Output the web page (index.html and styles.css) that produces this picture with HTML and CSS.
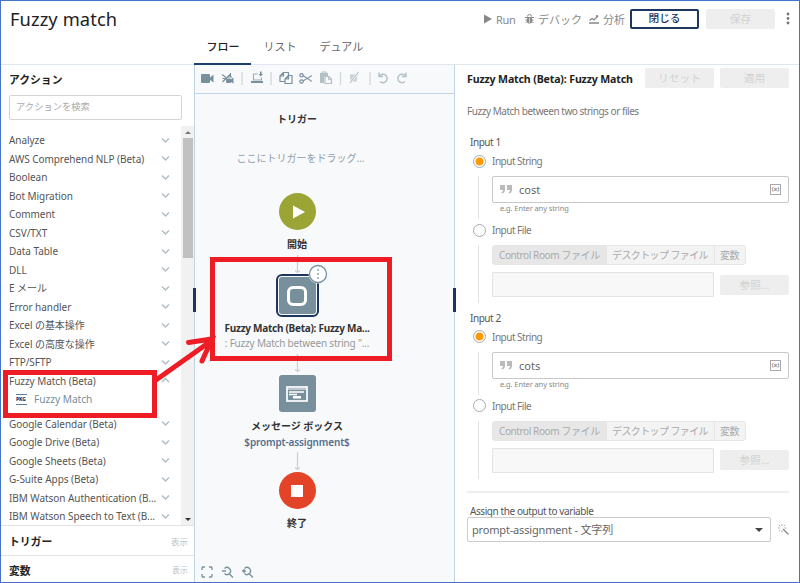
FILE: index.html
```html
<!DOCTYPE html>
<html lang="ja">
<head>
    <meta charset="UTF-8">
    <title>Fuzzy match</title>
    <link rel="stylesheet" href="styles.css">
</head>
<body>
    <div class="app">
        <header class="header">
            <div class="header-top">
                <h1 class="title">Fuzzy match</h1>
                <div class="tools">
                    <span class="tool run"><svg width="8" height="10" viewBox="0 0 8 10"><path d="M0 0.5L8 5L0 9.5Z" fill="#888"/></svg>Run</span>
                    <span class="tool debug"><svg width="9" height="10" viewBox="0 0 9 10"><path d="M2.5 2.5a2 2 0 0 1 4 0M0 3.5h9M0.5 6h8M0.5 9l2-2M8.5 9l-2-2" fill="none" stroke="#888"/><rect x="2" y="3" width="5" height="6.5" rx="2" fill="#888"/><path d="M4.5 4v5" stroke="#fff" stroke-width=".7"/></svg>デバック</span>
                    <span class="tool stats"><svg width="10" height="9" viewBox="0 0 10 9"><path d="M0.5 5.5L3 3.5L5 5L9 1M7 1h2.3M0 8h10" fill="none" stroke="#888" stroke-width="1.3"/></svg>分析</span>
                </div>
                <button class="btn btn-close">閉じる</button>
                <button class="btn btn-save" disabled>保存</button>
                <svg class="more" width="4" height="13" viewBox="0 0 4 13" fill="#777"><circle cx="2" cy="2" r="1.4"/><circle cx="2" cy="6.5" r="1.4"/><circle cx="2" cy="11" r="1.4"/></svg>
            </div>
            <nav class="tabs">
                <a class="tab active">フロー</a>
                <a class="tab">リスト</a>
                <a class="tab">デュアル</a>
            </nav>
        </header>
        <div class="main">
            <aside class="sidebar">
                <h2 class="side-title">アクション</h2>
                <div class="search">アクションを検索</div>
                <div class="list-wrap">
                    <ul class="list" id="actions"></ul>
                    <div class="scrollbar">
                        <span class="arrow-up"></span>
                        <span class="thumb"></span>
                        <span class="arrow-down"></span>
                    </div>
                </div>
                <div class="section"><b>トリガー</b><span>表示</span></div>
                <div class="section section-last"><b>変数</b><span>表示</span></div>
            </aside>
            <section class="center">
                <div class="toolbar">
                    <svg width="259" height="28" viewBox="195 65 259 28" fill="none">
                        <g fill="#78909c">
                            <rect x="201" y="74" width="9" height="9" rx="1"/>
                            <path d="M209.5 78L213.500 74.500V82.500L209.500 79.500Z"/>
                            <rect x="226" y="78.500" width="5" height="4.500" rx="1"/>
                            <path d="M230 80L233.500 77.500V83.500L230 81.500Z"/>
                            <rect x="251" y="81" width="12" height="2"/>
                            <path d="M260 71.500h1.600v2.500h1.400L260.800 76.500L258.500 74H260Z"/>
                        </g>
                        <path d="M222 74.500l4 3M222.500 82l8.500-8.500M228 77h4M222.500 78.500h3.500M230.500 73v4" stroke="#78909c" stroke-width="1.100"/>
                        <path d="M257.500 74h-4v6h8v-2.500" stroke="#9aabb4" stroke-width="1.100"/>
                        <path d="M242 72v13M271 72v13M340.500 72v13M370 72v13" stroke="#d3d8da" stroke-width="1.300"/>
                        <path d="M283.500 72.500h5v2.500M285 81.500h-5V76L283.500 72.500V76H280" stroke="#78909c" stroke-width="1.200" stroke-linejoin="round"/>
                        <path d="M288.500 75.500h3.500V83.500h-7V79L288.500 75.500V79H285" stroke="#78909c" stroke-width="1.200" stroke-linejoin="round"/>
                        <path d="M303 75.500l9 6M303 81l9-5.500" stroke="#8a9ea8" stroke-width="1.300"/>
                        <circle cx="301.500" cy="75.300" r="1.700" stroke="#78909c" stroke-width="1.200"/>
                        <circle cx="301.500" cy="81.500" r="1.700" stroke="#78909c" stroke-width="1.200"/>
                        <path d="M320 73h8v3h-4v7h-4Z" fill="#b3c1c7"/>
                        <path d="M322 73v-1h4v1" stroke="#b3c1c7"/>
                        <path d="M325 76.500h4l2.500 2.500v4.500H325Z" fill="#f8f9fb" stroke="#b3c1c7" stroke-width="1.200"/>
                        <path d="M328.500 76.500v3h3" stroke="#b3c1c7"/>
                        <path d="M350 74.500h7.500l-1 7h-6Z" fill="#c3ced3"/>
                        <path d="M350 83l8.500-11" stroke="#f8f9fb" stroke-width="2.500"/>
                        <path d="M350 83l8.500-11" stroke="#b3c1c7" stroke-width="1.200"/>
                        <path d="M379 72.500v4h4M379.500 76a4.200 4.200 0 1 1 .5 5.500" stroke="#b5c3c9" stroke-width="1.500"/>
                        <path d="M406 72.500v4h-4M405.500 76a4.200 4.200 0 1 0-.5 5.500" stroke="#b5c3c9" stroke-width="1.500"/>
                    </svg>
                </div>
                <div class="canvas">
                    <div class="flow">
                        <div class="flow-title">トリガー</div>
                        <div class="flow-hint">ここにトリガーをドラッグ...</div>
                        <div class="node circle start"><svg width="12" height="14" viewBox="0 0 12 14"><path d="M0 0.500L12 7L0 13.500Z" fill="#fff"/></svg></div>
                        <div class="label">開始</div>
                        <svg class="link" width="7" height="19" viewBox="0 0 7 19"><path d="M3.500 0v17M1 15.500l2.500 2L6 15.500" fill="none" stroke="#d0d0d0" stroke-width="1.300"/></svg>
                        <div class="node-selected">
                            <div class="node square"><svg width="20" height="20" viewBox="0 0 20 20"><rect x="1.500" y="1.500" width="17" height="17" rx="4.500" fill="none" stroke="#fff" stroke-width="3"/></svg></div>
                            <svg class="node-menu" width="20" height="20" viewBox="0 0 20 20"><circle cx="10" cy="10" r="9.500" fill="#f8f9fb"/><circle cx="10" cy="10" r="8.500" fill="#fff" stroke="#78909c" stroke-width="1.300"/><g fill="#90a4ae"><circle cx="10" cy="6" r="1"/><circle cx="10" cy="10" r="1"/><circle cx="10" cy="14" r="1"/></g></svg>
                        </div>
                        <div class="label label-match">Fuzzy Match (Beta): Fuzzy Ma...</div>
                        <div class="sub">: Fuzzy Match between string "...</div>
                        <svg class="link" width="7" height="19" viewBox="0 0 7 19"><path d="M3.500 0v17M1 15.500l2.500 2L6 15.500" fill="none" stroke="#d0d0d0" stroke-width="1.300"/></svg>
                        <div class="node square box"><svg width="22" height="16" viewBox="0 0 22 16"><rect x="1" y="1" width="20" height="14" fill="none" stroke="#fff" stroke-width="1.700"/><path d="M1 3h20" stroke="#fff"/><path d="M3 6h15M3 8.500h8" stroke="#fff" stroke-width="1.300"/><rect x="7" y="10" width="8" height="2.500" fill="#fff"/></svg></div>
                        <div class="label label-box">メッセージ ボックス</div>
                        <div class="sub variable">$prompt-assignment$</div>
                        <svg class="link" width="7" height="19" viewBox="0 0 7 19"><path d="M3.500 0v17M1 15.500l2.500 2L6 15.500" fill="none" stroke="#d0d0d0" stroke-width="1.300"/></svg>
                        <div class="node circle stop"><span></span></div>
                        <div class="label">終了</div>
                    </div>
                    <div class="zoom">
                        <svg width="12" height="12" viewBox="0 0 12 12"><path d="M1 4V2q0-1 1-1h2M8 1h2q1 0 1 1v2M11 8v2q0 1-1 1H8M4 11H2q-1 0-1-1V8" fill="none" stroke="#78909c" stroke-width="1.300"/></svg>
                        <svg width="12" height="12" viewBox="0 0 12 12"><path d="M2.500 2.500a3.500 3.500 0 1 1 0 5M7.500 8l3.500 3.500M0 5h4" fill="none" stroke="#78909c" stroke-width="1.300"/></svg>
                        <svg width="12" height="12" viewBox="0 0 12 12"><path d="M2.500 2.500a3.500 3.500 0 1 1 0 5M7.500 8l3.500 3.500M0 5h4M2 3v4" fill="none" stroke="#78909c" stroke-width="1.300"/></svg>
                    </div>
                </div>
                <span class="handle handle-left"></span>
                <span class="handle handle-right"></span>
            </section>
            <section class="panel">
                <div class="panel-head">
                    <h2>Fuzzy Match (Beta): Fuzzy Match</h2>
                    <button class="btn btn-small" disabled>リセット</button>
                    <button class="btn btn-small" disabled>適用</button>
                </div>
                <p class="desc">Fuzzy Match between two strings or files</p>
                <div class="group">
                    <div class="group-title">Input 1</div>
                    <div class="option"><span class="radio checked"></span>Input String</div>
                    <div class="string-body">
                        <div class="field">
                            <svg width="12" height="9" viewBox="0 0 12 9" fill="#bbb"><path d="M0 0h5v5q0 2.500-3 3.500L1.500 7.500Q3 6.500 3 5H0ZM7 0h5v5q0 2.500-3 3.500L8.500 7.500Q10 6.500 10 5H7Z"/></svg>
                            <span>cost</span>
                            <i class="var-icon">(x)</i>
                        </div>
                        <div class="eg">e.g. Enter any string</div>
                    </div>
                    <div class="option"><span class="radio"></span>Input File</div>
                    <div class="file-body">
                        <div class="segments"><span class="on">Control Room ファイル</span><span>デスクトップ ファイル</span><span>変数</span></div>
                        <div class="browse"><div class="path"></div><button class="btn btn-small" disabled>参照...</button></div>
                    </div>
                </div>
                <div class="group">
                    <div class="group-title">Input 2</div>
                    <div class="option"><span class="radio checked"></span>Input String</div>
                    <div class="string-body">
                        <div class="field">
                            <svg width="12" height="9" viewBox="0 0 12 9" fill="#bbb"><path d="M0 0h5v5q0 2.500-3 3.500L1.500 7.500Q3 6.500 3 5H0ZM7 0h5v5q0 2.500-3 3.500L8.500 7.500Q10 6.500 10 5H7Z"/></svg>
                            <span>cots</span>
                            <i class="var-icon">(x)</i>
                        </div>
                        <div class="eg">e.g. Enter any string</div>
                    </div>
                    <div class="option"><span class="radio"></span>Input File</div>
                    <div class="file-body">
                        <div class="segments"><span class="on">Control Room ファイル</span><span>デスクトップ ファイル</span><span>変数</span></div>
                        <div class="browse"><div class="path"></div><button class="btn btn-small" disabled>参照...</button></div>
                    </div>
                </div>
                <div class="output">
                    <div class="output-label">Assign the output to variable</div>
                    <div class="output-row">
                        <div class="select">prompt-assignment - 文字列<span class="caret"></span></div>
                        <svg width="11" height="11" viewBox="0 0 11 11"><path d="M5 5L10.500 10.500" stroke="#888" stroke-width="1.300"/><path d="M4 0v1.700M0 4h1.700M1 1l1.300 1.300M7.200 1L6 2.200M1 7.200L2.300 6M4 6.500V8.200M6.500 4h1.700" stroke="#999" stroke-width=".9" fill="none"/></svg>
                    </div>
                </div>
            </section>
        </div>
        <div class="mark mark-action"></div>
        <div class="mark mark-node"></div>
        <svg class="mark-arrow" width="70" height="60" viewBox="150 330 70 60"><path d="M156 380L211 341M188.500 342.500L212 339L202 361" fill="none" stroke="#ee1c25" stroke-width="5" stroke-linecap="round"/></svg>
    </div>
    <script>
        const actions = [
            'Analyze', 'AWS Comprehend NLP (Beta)', 'Boolean', 'Bot Migration', 'Comment',
            'CSV/TXT', 'Data Table', 'DLL', 'E メール', 'Error handler',
            'Excel の基本操作', 'Excel の高度な操作', 'FTP/SFTP', 'Fuzzy Match (Beta)',
            'Google Calendar (Beta)', 'Google Drive (Beta)', 'Google Sheets (Beta)',
            'G-Suite Apps (Beta)', 'IBM Watson Authentication (B...', 'IBM Watson Speech to Text (B...'
        ];
        const list = document.getElementById('actions');

        actions.forEach(name => {
            const open = name === 'Fuzzy Match (Beta)';
            const d = open ? 'M1 5L4.5 1.5L8 5' : 'M1 1.5L4.5 5L8 1.5';
            list.insertAdjacentHTML('beforeend',
                `<li class="item"><span>${name}</span><svg width="9" height="7" viewBox="0 0 9 7"><path d="${d}" fill="none" stroke="#b0bec5" stroke-width="1.5"/></svg></li>`);
            if (open) {
                list.insertAdjacentHTML('beforeend', '<li class="item child"><i class="pkg">PKG</i><span>Fuzzy Match</span></li>');
            }
        });
    </script>
</body>
</html>
```

FILE: styles.css
```css
* {
    box-sizing: border-box;
}
body {
    margin: 0;
    font-family: "Noto Sans", "Noto Sans CJK JP", sans-serif;
    font-size: 10px;
    color: #555;
    background: #fff;
}
h1, h2, p, ul {
    margin: 0;
    padding: 0;
}
svg {
    display: block;
    flex: none;
}
.app {
    position: relative;
    display: flex;
    flex-direction: column;
    width: 800px;
    height: 583px;
    border: 1px solid #4472c4;
    overflow: hidden;
    white-space: nowrap;
}
.header {
    height: 64px;
    border-bottom: 1px solid #dfe6ee;
}
.header-top {
    display: flex;
    align-items: center;
    height: 35px;
    padding-left: 9px;
}
.title {
    width: 474px;
    font-size: 18.3px;
    font-weight: 400;
    line-height: 34px;
    letter-spacing: 0.1px;
    color: #222;
}
.tools {
    display: flex;
    width: 146px;
    padding-top: 1px;
    font-size: 11px;
    color: #888;
}
.tool {
    display: flex;
    align-items: center;
    gap: 4px;
    height: 16px;
}
.run {
    width: 41px;
    letter-spacing: -0.3px;
}
.debug {
    width: 64px;
}
.btn {
    flex: none;
    width: 69px;
    height: 20px;
    padding: 0;
    border: 0;
    border-radius: 2px;
    background: #eee;
    color: #d2d2d2;
    font-family: inherit;
    font-size: 10.7px;
    line-height: 18px;
}
.btn-close {
    height: 20px;
    border: 2px solid #1c3660;
    background: #fff;
    color: #1c3660;
    font-weight: 500;
    line-height: 15px;
}
.btn-save {
    margin-left: 7px;
}
.more {
    margin-left: 11px;
}
.tabs {
    display: flex;
    padding-left: 193px;
    height: 29px;
    font-size: 11px;
}
.tab {
    height: 29px;
    padding-left: 12.5px;
    line-height: 22px;
    color: #666;
}
.tab.active {
    width: 57px;
    border-bottom: 2px solid #1c3f70;
    color: #222;
    font-weight: 500;
}
.tab + .tab + .tab {
    padding-left: 23px;
}
.main {
    display: flex;
    flex: 1;
    min-height: 0;
}
.sidebar {
    display: flex;
    flex-direction: column;
    width: 193px;
}
.side-title {
    height: 30px;
    padding-left: 8px;
    font-size: 10.8px;
    line-height: 29px;
    font-weight: 700;
    color: #222;
}
.search {
    width: 173px;
    height: 25px;
    margin-left: 8px;
    padding-left: 6px;
    border: 1px solid #d5d5d5;
    border-radius: 2px;
    font-size: 9.3px;
    line-height: 22px;
    color: #aaa;
}
.list-wrap {
    display: flex;
    height: 399px;
    margin-top: 6px;
}
.list {
    width: 180px;
    padding-top: 5.2px;
    list-style: none;
}
.item {
    display: flex;
    align-items: center;
    justify-content: space-between;
    height: 18.5px;
    padding: 0 11px 0 8px;
    line-height: 18px;
    letter-spacing: -0.05px;
}
.item.child {
    height: 24.5px;
    justify-content: flex-start;
    align-items: flex-start;
    gap: 7px;
    padding-left: 15px;
    color: #78909c;
    font-size: 10.2px;
}
.pkg {
    width: 11px;
    height: 11px;
    margin-top: 4px;
    border-top: 1px solid #607d9b;
    border-bottom: 1px solid #607d9b;
    font-size: 5px;
    font-style: normal;
    font-weight: 800;
    line-height: 9px;
    color: #1c3660;
}
.scrollbar {
    display: flex;
    flex-direction: column;
    align-items: center;
    width: 13px;
    padding: 5px 0 4px;
    background: #f1f1f1;
}
.arrow-up {
    border: 3px solid transparent;
    border-top: 0;
    border-bottom-color: #777;
}
.thumb {
    width: 10px;
    height: 120px;
    margin-top: 4px;
    background: #c1c1c1;
}
.arrow-down {
    margin-top: auto;
    border: 3px solid transparent;
    border-bottom: 0;
    border-top-color: #333;
}
.section {
    display: flex;
    align-items: center;
    justify-content: space-between;
    height: 30px;
    padding: 0 6px 0 8px;
    border-top: 1px solid #e3e3e3;
    color: #bbc3c8;
    font-size: 8.5px;
}
.section b {
    font-size: 10.8px;
    color: #222;
}
.section-last {
    flex: 1;
    padding-top: 1px;
    font-size: 8px;
}
.center {
    position: relative;
    display: flex;
    flex-direction: column;
    width: 261px;
    border: solid #bfd4e6;
    border-width: 0 1px;
    background: #f8f9fb;
}
.toolbar {
    height: 29px;
    border-bottom: 1px solid #bfd4e6;
}
.canvas {
    display: flex;
    flex-direction: column;
    flex: 1;
}
.flow {
    display: flex;
    flex-direction: column;
    align-items: center;
    width: 204px;
    height: 472px;
    padding-top: 16px;
}
.flow-title {
    height: 40px;
    font-weight: 700;
    line-height: 18px;
    color: #333;
}
.flow-hint {
    height: 43px;
    padding-left: 7px;
    line-height: 17px;
    color: #90a0a8;
}
.node {
    display: flex;
    flex: none;
    align-items: center;
    justify-content: center;
    width: 37px;
    height: 37px;
}
.circle {
    border-radius: 50%;
}
.start {
    padding-left: 3px;
    background: #9ba536;
}
.stop {
    margin-top: 1px;
    background: #e34326;
}
.stop span {
    width: 12px;
    height: 12px;
    background: #fff;
}
.square {
    border-radius: 3px;
    background: #78909c;
}
.label {
    height: 25px;
    line-height: 28px;
    font-weight: 700;
    color: #333;
}
.node-selected {
    position: relative;
    flex: none;
    width: 43px;
    height: 43px;
    padding: 1px;
    border: 2px solid #1c3660;
    border-radius: 6px;
    margin-bottom: 3px;
}
.node-menu {
    position: absolute;
    top: -12px;
    right: -11px;
}
.label-match {
    height: 15px;
    line-height: 16px;
    letter-spacing: -0.27px;
}
.sub {
    height: 19px;
    line-height: 16px;
    letter-spacing: -0.2px;
    color: #999;
}
.box {
    margin-top: 2px;
}
.label-box {
    height: 22px;
}
.variable {
    height: 18px;
    font-weight: 600;
    letter-spacing: -0.15px;
    color: #53708f;
}
.zoom {
    display: flex;
    gap: 8.5px;
    padding-left: 6px;
}
.handle {
    position: absolute;
    top: 223px;
    width: 3px;
    height: 24px;
    background: #1c3660;
}
.handle-left {
    left: -2px;
}
.handle-right {
    right: -2px;
}
.panel {
    flex: 1;
    padding: 3px 10px 0 12px;
}
.panel-head {
    display: flex;
    gap: 6px;
}
.panel-head h2 {
    width: 172px;
    font-size: 10.6px;
    line-height: 22px;
    font-weight: 700;
    letter-spacing: -0.15px;
    color: #222;
}
.desc {
    height: 43px;
    padding-top: 12px;
    line-height: 18px;
    letter-spacing: -0.47px;
    color: #777;
}
.group {
    height: 175.5px;
    padding-left: 3px;
}
.group-title {
    height: 18px;
    line-height: 18px;
    letter-spacing: -0.45px;
}
.option {
    display: flex;
    align-items: center;
    gap: 6px;
    height: 20px;
    margin-left: 3px;
    letter-spacing: -0.5px;
    color: #777;
}
.radio {
    width: 13px;
    height: 13px;
    border: 1px solid #aaa;
    border-radius: 50%;
}
.radio.checked {
    background: radial-gradient(circle, #ff9b00 0 3.5px, #fff 4.5px);
}
.string-body {
    height: 43px;
    margin: 5px 0 1px 8px;
    padding-left: 13px;
    border-left: 1px solid #e3e3e3;
}
.field {
    display: flex;
    align-items: center;
    height: 27px;
    padding: 0 7px;
    border: 1px solid #c8c8c8;
    border-radius: 2px;
    font-size: 11px;
    color: #666;
}
.field span {
    margin-left: 7px;
}
.var-icon {
    width: 11px;
    height: 11px;
    margin-left: auto;
    border: 1px solid #aaa;
    font-size: 6px;
    font-style: normal;
    font-weight: 700;
    line-height: 8px;
    text-align: center;
    color: #888;
}
.eg {
    padding-left: 8px;
    font-size: 7.5px;
    line-height: 11px;
    letter-spacing: -0.1px;
    color: #888;
}
.file-body {
    height: 58px;
    margin: 5px 0 0 8px;
    padding-left: 13px;
    border-left: 1px solid #e3e3e3;
}
.segments {
    display: flex;
    width: 254px;
    height: 20px;
    border: 1px solid #e6e6e6;
    border-radius: 3px;
    background: #f3f3f3;
    line-height: 18px;
    letter-spacing: -0.4px;
    color: #aaa;
}
.segments span {
    padding: 0 6px;
    border-right: 1px solid #e6e6e6;
}
.segments .on {
    width: 114px;
    background: #e7e7e7;
}
.segments span:nth-child(2) {
    width: 108px;
    padding: 0 5px;
    letter-spacing: -0.6px;
}
.segments span:last-child {
    border-right: 0;
    padding: 0 5px;
}
.browse {
    display: flex;
    align-items: center;
    gap: 6px;
    margin-top: 7px;
}
.path {
    width: 222px;
    height: 25px;
    border: 1px solid #e3e3e3;
    border-radius: 1px;
    background: #f8f8f8;
}
.output {
    margin-top: 7px;
    padding-top: 9px;
    border-top: 2px solid #eee;
}
.output-label {
    height: 15px;
    padding-left: 3px;
    line-height: 18px;
    letter-spacing: -0.42px;
}
.output-row {
    display: flex;
    align-items: center;
    gap: 7px;
}
.select {
    display: flex;
    align-items: center;
    justify-content: space-between;
    width: 304px;
    height: 25px;
    padding: 0 7px 0 4px;
    border: 1px solid #ccc;
    border-radius: 2px;
    font-size: 11px;
    line-height: 22px;
    letter-spacing: -0.17px;
    color: #666;
}
.caret {
    border: 4px solid transparent;
    border-top-color: #444;
    border-bottom: 0;
}
.mark {
    position: absolute;
    border: 5px solid #ee1c25;
}
.mark-action {
    left: 2px;
    top: 369px;
    width: 154px;
    height: 48px;
}
.mark-node {
    left: 209px;
    top: 256px;
    width: 182px;
    height: 104px;
}
.mark-arrow {
    position: absolute;
    left: 149px;
    top: 329px;
}
```
